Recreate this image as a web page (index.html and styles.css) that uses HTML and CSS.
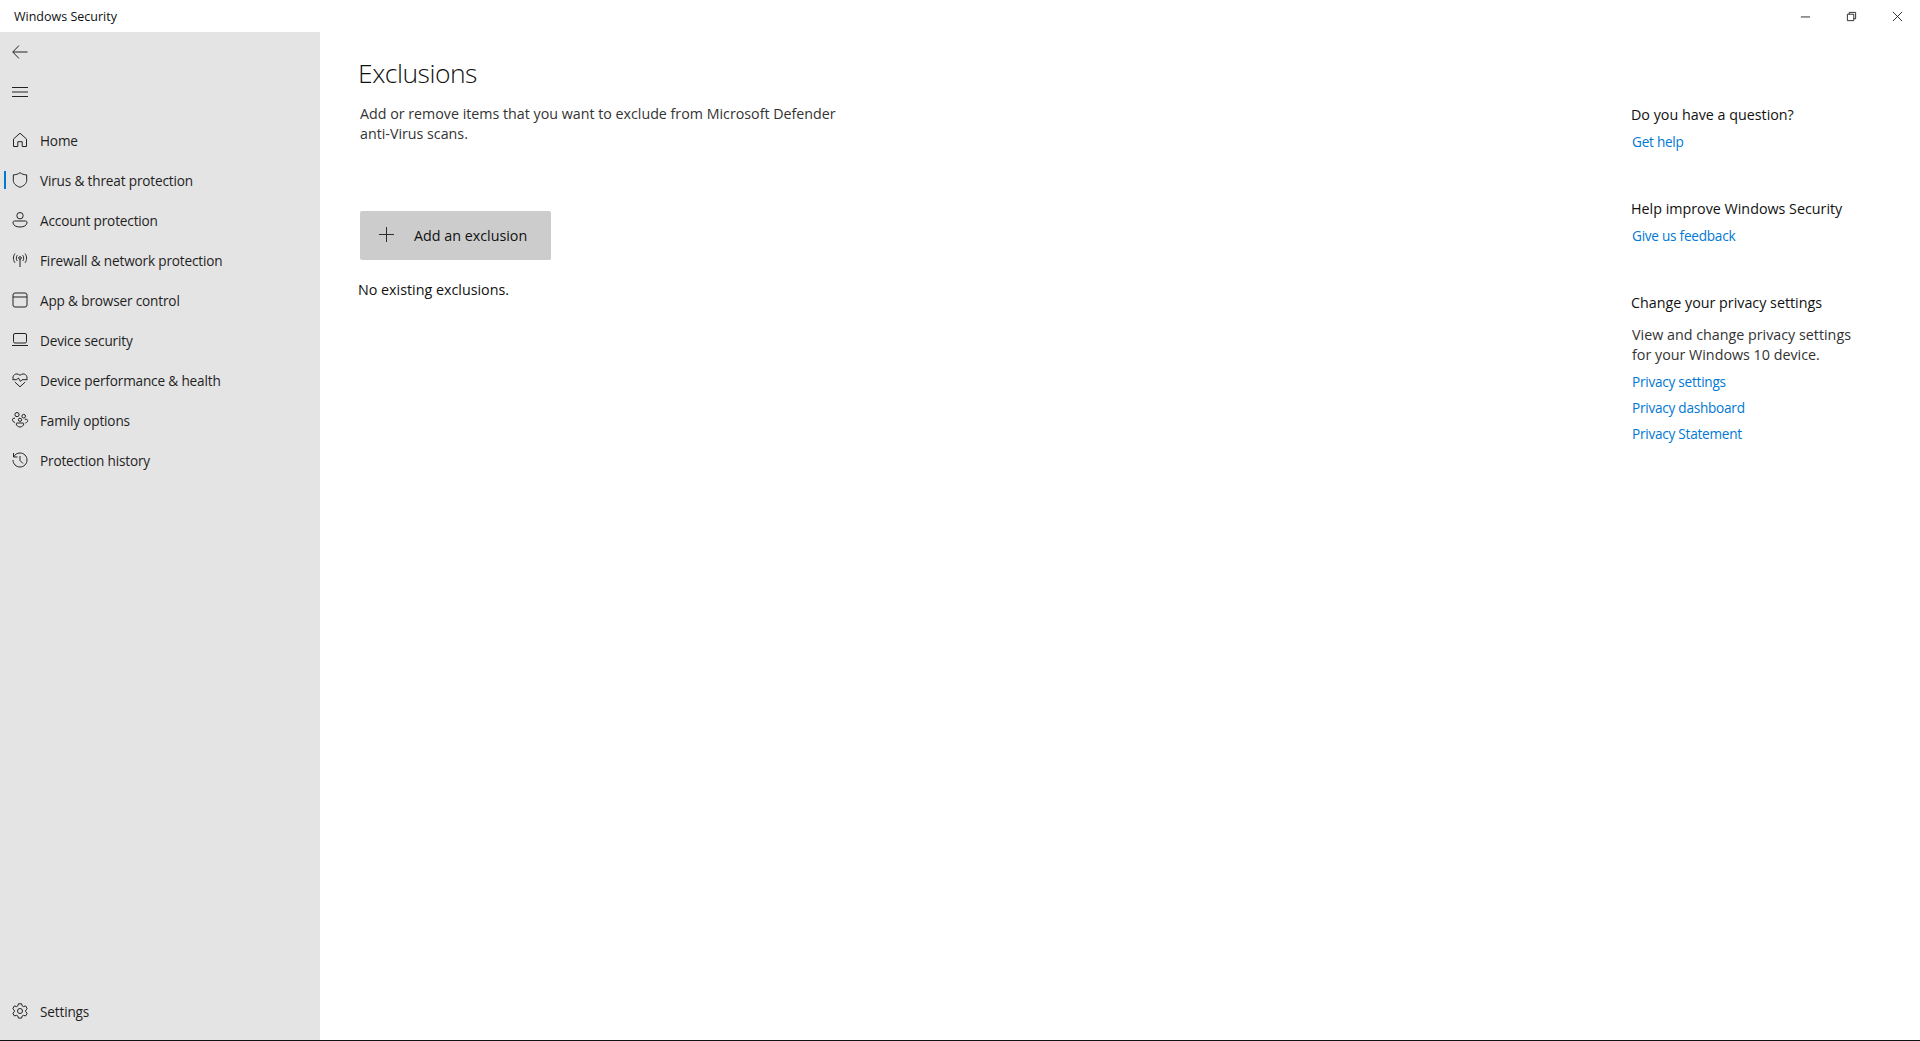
FILE: index.html
```html
<!DOCTYPE html>
<html lang="en">
<head>
<meta charset="utf-8">
<title>Windows Security</title>
<link rel="stylesheet" href="styles.css">
</head>
<body>
<div class="window">
  <header class="titlebar">
    <span class="app-title">Windows Security</span>
    <div class="caption">
      <span class="cap-btn"><svg viewBox="0 0 12 12" class="cap-ico"><path d="M1 6.500h10"/></svg></span>
      <span class="cap-btn"><svg viewBox="0 0 12 12" class="cap-ico"><path d="M1.500 3.500h7v7h-7zM3.500 3.500v-2h7v7h-2"/></svg></span>
      <span class="cap-btn"><svg viewBox="0 0 12 12" class="cap-ico"><path d="M1 1l10 10M11 1L1 11"/></svg></span>
    </div>
  </header>
  <div class="body">
    <nav class="sidebar">
      <div class="tool"><svg class="ico" viewBox="0 0 16 16"><path d="M15.500 8H.8M6.900 1.600L.8 8l6.100 6.400"/></svg></div>
      <div class="tool"><svg class="ico" viewBox="0 0 16 16"><path d="M0 3.500h16M0 8h16M0 12.500h16"/></svg></div>
      <ul class="nav-list">
        <li class="nav-item"><svg class="ico" viewBox="0 0 16 16"><path d="M1.500 14.500V7L8 1.200 14.500 7v7.500h-4.300V9.700H5.800v4.800z" stroke-linejoin="round"/></svg>Home</li>
        <li class="nav-item active"><svg class="ico" viewBox="0 0 16 16"><path d="M8 .7c2 1.400 4 2.100 6.700 2.200v5.300c0 3.300-2.600 5.700-6.700 7.100-4.100-1.400-6.700-3.800-6.700-7.100V2.900C4 2.800 6 2.100 8 .7z"/></svg>Virus &amp; threat protection</li>
        <li class="nav-item"><svg class="ico" viewBox="0 0 16 16"><circle cx="8" cy="3.700" r="3.200"/><path d="M2.500 9h11c1.100 0 1.700.8 1.500 2-.5 2.500-3 4-7 4s-6.500-1.500-7-4c-.2-1.200.4-2 1.500-2z"/></svg>Account protection</li>
        <li class="nav-item"><svg class="ico" viewBox="0 0 16 16"><circle cx="8" cy="6" r="1.300"/><path d="M8 7.300V15M5.300 3.200C4 5 4 7.500 5.300 9M10.700 3.200c1.300 1.800 1.300 4.300 0 5.800M3 1.500C.9 4.300.9 8 3 10.800M13 1.500c2.100 2.800 2.100 6.500 0 9.300"/></svg>Firewall &amp; network protection</li>
        <li class="nav-item"><svg class="ico" viewBox="0 0 16 16"><rect x="1" y="1" width="14" height="14" rx="2"/><path d="M1 5h14"/></svg>App &amp; browser control</li>
        <li class="nav-item"><svg class="ico" viewBox="0 0 16 16"><rect x="1.500" y="1.500" width="13" height="9.500" rx="1.500"/><path d="M0 13.500h16"/></svg>Device security</li>
        <li class="nav-item"><svg class="ico" viewBox="0 0 16 16"><path d="M1.400 7.400C-.4 3.800 3.800-.2 8 3.300c4.200-3.500 8.400.5 6.600 4.100M.4 7.700h4.400l1.500-1.800 2.200 3.500 1.500-1.700h5.600M2.800 10L8 14.800 13.200 10"/></svg>Device performance &amp; health</li>
        <li class="nav-item"><svg class="ico" viewBox="0 0 16 16"><circle cx="5" cy="2.600" r="2.100"/><circle cx="11.700" cy="4.200" r="1.800"/><circle cx="8" cy="7.800" r="1.600"/><path d="M3 6.200H2C.6 6.200.2 7.600.7 8.800c.4.900 1.100 1.500 2.300 1.700M12.800 7.300h1.500c1.300 0 1.700 1.200 1.100 2.300-.4.800-1.100 1.200-2 1.400M5 11h6c.6 0 .9.500.8 1-.3 1.700-1.900 3-3.800 3s-3.500-1.300-3.800-3c-.1-.5.200-1 .8-1z"/></svg>Family options</li>
        <li class="nav-item"><svg class="ico" viewBox="0 0 16 16"><path d="M1.500 1v4h4M1.600 5C2.700 2.600 5.100 1 8 1c3.900 0 7 3.100 7 7s-3.100 7-7 7-7-3.100-7-7M8 4v4.500l3 3"/></svg>Protection history</li>
      </ul>
      <div class="nav-item settings"><svg class="ico" viewBox="0 0 16 16"><circle cx="8" cy="8" r="2.500"/><path d="M6.400.8h3.200l.5 2 1.500.8 2-.7 1.600 2.800-1.500 1.400v1.700l1.500 1.400-1.600 2.800-2-.7-1.500.8-.5 2H6.400l-.5-2-1.500-.8-2 .7L.8 10.200l1.500-1.400V7.100L.8 5.700l1.600-2.800 2 .7 1.500-.8z"/></svg>Settings</div>
    </nav>
    <main class="main">
      <section class="content">
        <h1 class="page-title">Exclusions</h1>
        <p class="desc">Add or remove items that you want to exclude from Microsoft Defender<br>anti-Virus scans.</p>
        <div class="add-btn"><svg class="plus" viewBox="0 0 16 16"><path d="M8 0v16M0 8h16"/></svg><span>Add an exclusion</span></div>
        <p class="empty">No existing exclusions.</p>
      </section>
      <aside class="aside">
        <div class="group">
          <h2 class="aside-h">Do you have a question?</h2>
          <a class="link">Get help</a>
        </div>
        <div class="group">
          <h2 class="aside-h">Help improve Windows Security</h2>
          <a class="link">Give us feedback</a>
        </div>
        <div class="group">
          <h2 class="aside-h">Change your privacy settings</h2>
          <p class="aside-p">View and change privacy settings<br>for your Windows 10 device.</p>
          <a class="link">Privacy settings</a>
          <a class="link">Privacy dashboard</a>
          <a class="link">Privacy Statement</a>
        </div>
      </aside>
    </main>
  </div>
  <div class="edge"></div>
</div>
</body>
</html>
```
FILE: styles.css
```css
* { box-sizing: border-box; }
html, body { margin: 0; height: 100%; }
body {
  background: #fff;
  color: #111;
  font-family: "Open Sans", "Noto Sans", "Liberation Sans", sans-serif;
  font-size: 14.3px;
  overflow: hidden;
}
.window { display: flex; flex-direction: column; height: 1041px; }
.titlebar { height: 32px; display: flex; align-items: center; justify-content: space-between; flex: none; }
.app-title { font-size: 12.5px; padding-left: 14px; color: #111; }
.caption { display: flex; }
.cap-btn { width: 46px; height: 32px; display: flex; align-items: center; justify-content: center; }
.cap-ico { width: 11px; height: 11px; fill: none; stroke: #222; stroke-width: 1; }
.body { flex: 1; display: flex; min-height: 0; }
.sidebar { width: 320px; background: #e4e4e4; display: flex; flex-direction: column; flex: none; padding-bottom: 7px; }
.ico { width: 16px; height: 16px; fill: none; stroke: #222; stroke-width: 1; flex: none; overflow: visible; }
.tool { height: 40px; display: flex; align-items: center; padding-left: 12px; }
.nav-list { list-style: none; margin: 8px 0 0; padding: 0; flex: 1; }
.nav-item { height: 40px; display: flex; align-items: center; gap: 12px; padding-left: 12px; color: #1f1f1f; letter-spacing: -0.16px; font-size: 13.6px; position: relative; }
.nav-item.settings { margin-bottom: 2px; }
.nav-item.active::before { content: ""; position: absolute; left: 4px; top: 11px; width: 2px; height: 18px; background: #0078d4; }
.main { flex: 1; display: flex; justify-content: space-between; min-width: 0; }
.content { padding: 21px 0 0 38px; }
.page-title { margin: 0; font-size: 26.5px; font-weight: 300; line-height: 40px; color: #111; letter-spacing: -0.5px; }
.desc { margin: 11px 0 0 2px; line-height: 20px; color: #333; font-size: 14.25px; }
.add-btn { margin: 67px 0 0 2px; width: 191px; height: 49px; background: #ccc; border-radius: 2px; display: flex; align-items: center; gap: 20px; padding-left: 19px; color: #111; }
.plus { width: 15px; height: 15px; fill: none; stroke: #222; stroke-width: 1; margin-top: -3px; }
.empty { margin: 20px 0 0; line-height: 20px; }
.aside { width: 289px; padding-top: 73px; flex: none; }
.group { margin-bottom: 44px; }
.aside-h { margin: 0 0 4px; font-size: 14.3px; font-weight: 400; line-height: 20px; color: #111; }
.aside-p { margin: 12px 0 4px 1px; line-height: 20px; color: #333; }
.link { display: block; margin-left: 1px; color: #0078d4; font-size: 13.6px; line-height: 26px; letter-spacing: -0.25px; }
.edge { height: 1px; background: #111; flex: none; }
```
